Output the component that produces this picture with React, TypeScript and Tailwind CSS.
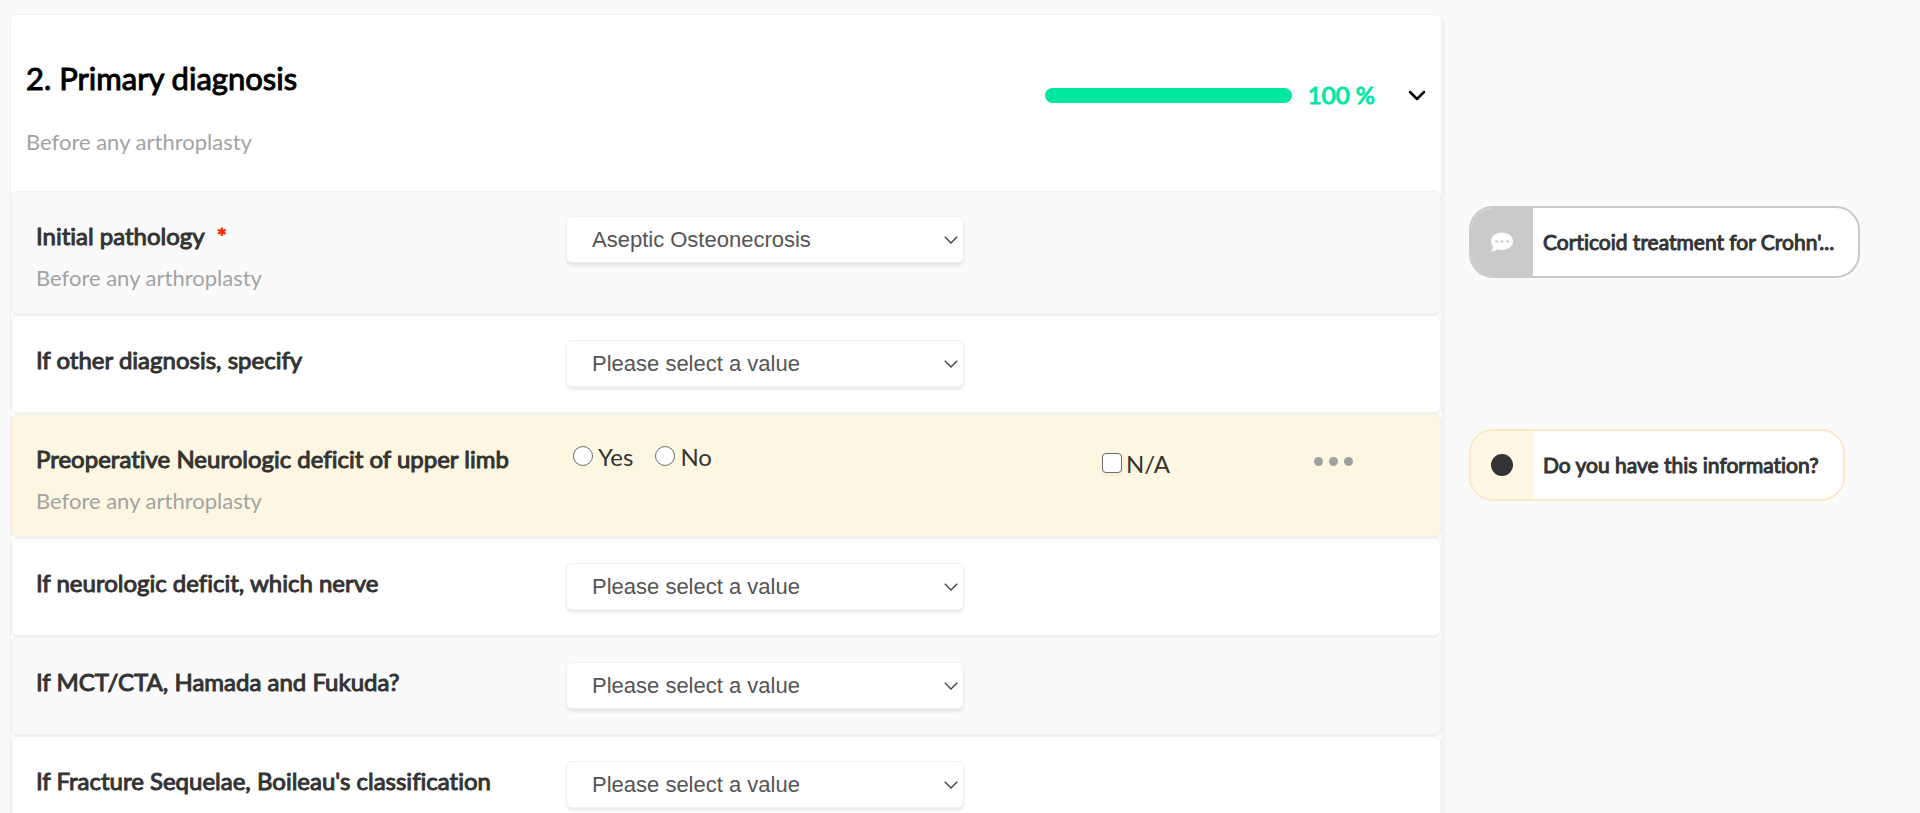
import React, { type FC, type ReactNode } from "react";
import clsx from "clsx";

interface Note {
  kind: "comment" | "question";
  text: string;
}

interface Question {
  id: string;
  label: string;
  hint?: string;
  required?: boolean;
  type: "select" | "radio";
  value?: string;
  tone: "gray" | "white" | "warning";
  note?: Note;
}

const questions: Question[] = [
  {
    id: "initial-pathology",
    label: "Initial pathology",
    hint: "Before any arthroplasty",
    required: true,
    type: "select",
    value: "Aseptic Osteonecrosis",
    tone: "gray",
    note: { kind: "comment", text: "Corticoid treatment for Crohn'..." },
  },
  {
    id: "other-diagnosis",
    label: "If other diagnosis, specify",
    type: "select",
    tone: "white",
  },
  {
    id: "neurologic-deficit",
    label: "Preoperative Neurologic deficit of upper limb",
    hint: "Before any arthroplasty",
    type: "radio",
    tone: "warning",
    note: { kind: "question", text: "Do you have this information?" },
  },
  {
    id: "which-nerve",
    label: "If neurologic deficit, which nerve",
    type: "select",
    tone: "white",
  },
  {
    id: "hamada-fukuda",
    label: "If MCT/CTA, Hamada and Fukuda?",
    type: "select",
    tone: "gray",
  },
  {
    id: "boileau",
    label: "If Fracture Sequelae, Boileau's classification",
    type: "select",
    tone: "white",
  },
];

const tones = {
  gray: "bg-[#fafafa]",
  white: "bg-white",
  warning: "bg-[#fdf7e2]",
};

const PLACEHOLDER = "Please select a value";

const SelectField: FC<{ id: string; value?: string }> = ({ id, value }) => (
  <div className="relative w-[398px] max-w-full">
    <select
      id={id}
      defaultValue={value ?? PLACEHOLDER}
      className="block h-[47px] w-full appearance-none rounded-md border border-[#f0f0f0] bg-white pr-9 pl-[25px] font-['Liberation_Sans',Arial,sans-serif] text-[22px] leading-7 text-[#555] shadow-[0_3px_3px_rgba(0,0,0,0.08)]"
    >
      <option>{PLACEHOLDER}</option>
      <option>Aseptic Osteonecrosis</option>
    </select>
    <svg
      viewBox="0 0 14 8"
      className="pointer-events-none absolute top-5 right-1.5 h-2 w-3.5"
      fill="none"
      stroke="#444"
      strokeWidth="1.4"
    >
      <path d="M0.8 0.8 L7 7 L13.2 0.8" />
    </svg>
  </div>
);

const RadioField: FC<{ id: string }> = ({ id }) => (
  <div className="flex gap-[22px] pt-0.5 pl-[7px]">
    {["Yes", "No"].map((option) => (
      <label key={option} className="flex gap-[5px] text-2xl leading-8 text-[#333]">
        <input
          type="radio"
          name={id}
          className="mt-[5px] size-5 appearance-none rounded-full border border-[#6b6b6b] bg-white checked:border-[6px]"
        />
        {option}
      </label>
    ))}
  </div>
);

const NoteCard: FC<Note> = ({ kind, text }) => (
  <button
    type="button"
    className={clsx(
      "flex h-[72px] overflow-hidden rounded-3xl border-2 bg-white",
      kind === "comment" ? "border-[#cacaca]" : "border-[#fbe8c8]"
    )}
  >
    <span
      className={clsx(
        "flex h-full w-[62px] items-center justify-center",
        kind === "comment" ? "bg-[#cacaca]" : "bg-[#fff7e4]"
      )}
    >
      {kind === "comment" ? (
        <svg viewBox="0 0 22 20" className="h-5 w-[22px]">
          <path
            fill="#fff"
            d="M11 0.5C17 0.5 22 4.300 22 9.200S17 18 11 18C9.300 18 7.700 17.700 6.300 17.200C5 18.300 3 19.500 0.500 19.500C0.200 19.500 0 19.200 0.200 18.900C1 18 2 16.500 2.200 14.600C0.800 13.100 0 11.200 0 9.200C0 4.300 5 0.500 11 0.500Z"
          />
          <circle cx="5.500" cy="9.500" r="1.300" fill="#cacaca" />
          <circle cx="11" cy="9.500" r="1.300" fill="#cacaca" />
          <circle cx="16.500" cy="9.500" r="1.300" fill="#cacaca" />
        </svg>
      ) : (
        <span className="size-[22px] rounded-full bg-[#333]" />
      )}
    </span>
    <span className="self-center pr-6 pl-2.5 text-[21px] leading-7 whitespace-nowrap text-[#333] [-webkit-text-stroke:1px]">
      {text}
    </span>
  </button>
);

/* One slice of the panel, with the notes gutter beside it */
const Slice: FC<{ first?: boolean; note?: Note; children: ReactNode }> = ({
  first,
  note,
  children,
}) => (
  <div className="flex">
    <div
      className={clsx(
        "w-3/4 shrink-0 border-l border-[#f0f0f0] bg-white",
        first
          ? "rounded-t-md border-t shadow-[4px_4px_2px_#f2f2f2]"
          : "shadow-[4px_0_2px_#f2f2f2]"
      )}
    >
      {children}
    </div>
    {note && (
      <div className="pt-[15px] pl-7">
        <NoteCard {...note} />
      </div>
    )}
  </div>
);

const QuestionRow: FC<{ question: Question }> = ({ question }) => {
  const { id, label, hint, required, type, value, tone } = question;
  return (
    <div
      className={clsx(
        "grid grid-cols-[530fr_536fr_212fr_126fr] rounded-md border border-b-2 border-[#f0f0f0] pt-6 pl-6",
        hint ? "pb-[21px]" : "pb-[25px]",
        tones[tone]
      )}
    >
      <div>
        <label
          htmlFor={type === "select" ? id : undefined}
          className="block text-2xl leading-10 text-[#333] [-webkit-text-stroke:1px]"
        >
          {label}
          {required && <span className="ml-3 text-[#ff2600]">*</span>}
        </label>
        {hint && (
          <p className="pt-2 text-[22px] leading-7 text-[#a3a3a3]">{hint}</p>
        )}
      </div>
      {type === "select" ? (
        <SelectField id={id} value={value} />
      ) : (
        <>
          <RadioField id={id} />
          <label className="flex items-start gap-1 pt-[9px] text-2xl leading-8 text-[#333]">
            <input
              type="checkbox"
              className="mt-[5px] size-5 appearance-none rounded-sm border border-[#6b6b6b] bg-white shadow-[0_3px_3px_rgba(0,0,0,0.04)] checked:bg-[#6b6b6b]"
            />
            N/A
          </label>
          <button
            type="button"
            aria-label="More actions"
            className="flex h-11 items-center gap-1.5 self-start"
          >
            <span className="size-[9px] rounded-full bg-[#a0a0a0]" />
            <span className="size-[9px] rounded-full bg-[#a0a0a0]" />
            <span className="size-[9px] rounded-full bg-[#a0a0a0]" />
          </button>
        </>
      )}
    </div>
  );
};

const App: FC = () => {
  return (
    <main className="h-screen overflow-hidden bg-[#fafafa] pt-3.5 pr-0.5 pl-2.5 font-[Lato,sans-serif]">
      <Slice first>
        <header className="flex h-44 items-start justify-between px-[15px]">
          <div className="pt-[43px]">
            <h2 className="text-[31px] leading-10 text-black [-webkit-text-stroke:1px]">
              2. Primary diagnosis
            </h2>
            <p className="pt-7 text-[22px] leading-8 text-[#a3a3a3]">
              Before any arthroplasty
            </p>
          </div>
          <div className="flex items-center pt-16">
            <div className="mr-4 h-[15px] w-[247px] rounded-full bg-[#00e7a0]" />
            <span className="text-2xl leading-8 text-[#00e7a0] [-webkit-text-stroke:1px]">
              100 %
            </span>
            <button type="button" aria-label="Collapse section" className="ml-[33px]">
              <svg
                viewBox="0 0 18 12"
                className="h-3 w-[18px]"
                fill="none"
                stroke="#000"
                strokeWidth="2.5"
                strokeLinecap="round"
                strokeLinejoin="round"
              >
                <path d="M2 3 L9 10 L16 3" />
              </svg>
            </button>
          </div>
        </header>
      </Slice>
      <div className="[font-variant-ligatures:no-common-ligatures]">
        {questions.map((question) => (
          <Slice key={question.id} note={question.note}>
            <QuestionRow question={question} />
          </Slice>
        ))}
      </div>
    </main>
  );
};

export default App;
